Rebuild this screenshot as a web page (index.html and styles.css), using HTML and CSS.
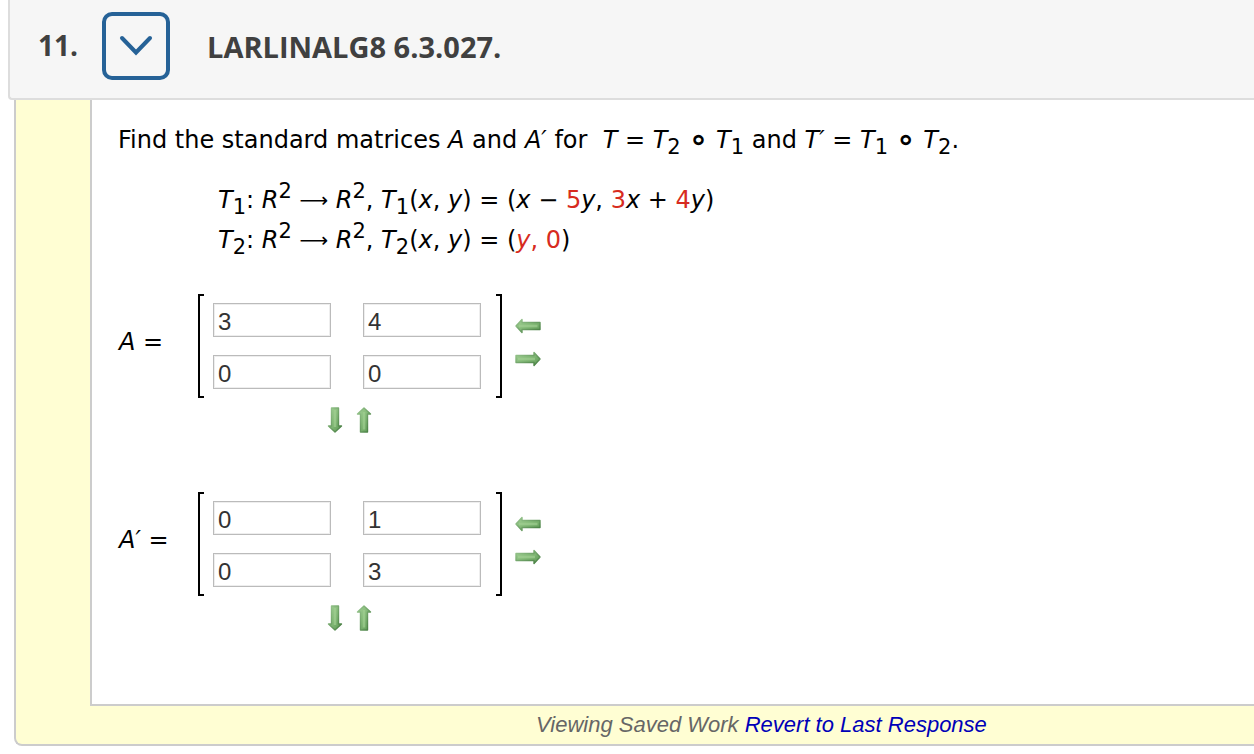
FILE: index.html
```html
<!DOCTYPE html>
<html lang="en">
<head>
<meta charset="utf-8">
<title>LARLINALG8 6.3.027.</title>
<link rel="stylesheet" href="styles.css">
</head>
<body>
<svg class="defs" width="0" height="0" aria-hidden="true">
  <defs>
    <linearGradient id="green" x1="0" y1="0" x2="1" y2="1">
      <stop offset="0" stop-color="#a3d096"/>
      <stop offset="0.5" stop-color="#82b976"/>
      <stop offset="1" stop-color="#5a9652"/>
    </linearGradient>
    <linearGradient id="edge" x1="0" y1="0" x2="1" y2="1">
      <stop offset="0" stop-color="#9bc991"/>
      <stop offset="1" stop-color="#427a3d"/>
    </linearGradient>
    <symbol id="left" viewBox="0 0 26 16">
      <path d="M1 8 7 1.500V4.500H25V11.500H7V14.500Z" fill="url(#green)" stroke="url(#edge)" stroke-width="1.400" stroke-linejoin="round"/>
      <path d="M4 8H22.500" stroke="#a5d296" stroke-width="2.500" opacity=".6"/>
    </symbol>
    <symbol id="right" viewBox="0 0 26 16">
      <path d="M25 8 19 1.500V4.500H1V11.500H19V14.500Z" fill="url(#green)" stroke="url(#edge)" stroke-width="1.400" stroke-linejoin="round"/>
      <path d="M3 8H20" stroke="#a5d296" stroke-width="2.500" opacity=".6"/>
    </symbol>
    <symbol id="down" viewBox="0 0 16 26">
      <path d="M8 25 1.500 19H4.500V1H11.500V19H14.500Z" fill="url(#green)" stroke="url(#edge)" stroke-width="1.400" stroke-linejoin="round"/>
      <path d="M8 3V20" stroke="#a5d296" stroke-width="2.500" opacity=".6"/>
    </symbol>
    <symbol id="up" viewBox="0 0 16 26">
      <path d="M8 1 1.500 7H4.500V25H11.500V7H14.500Z" fill="url(#green)" stroke="url(#edge)" stroke-width="1.400" stroke-linejoin="round"/>
      <path d="M8 5V22.500" stroke="#a5d296" stroke-width="2.500" opacity=".6"/>
    </symbol>
  </defs>
</svg>
<main class="question">
  <header class="question-header">
    <span class="number">11.</span>
    <button class="toggle" type="button" aria-label="Collapse question">
      <svg width="34" height="22" viewBox="0 0 34 22" fill="none" stroke="#266297" stroke-width="4" stroke-linecap="round"><path d="M3 3 17 17.500 31 3"/></svg>
    </button>
    <h1 class="title">LARLINALG8 6.3.027.</h1>
  </header>
  <div class="panel">
    <div class="content">
      <p class="prompt">Find the standard matrices <i>A</i> and <i>A′</i> for&nbsp; <i>T</i> = <i>T</i><sub>2</sub> <b class="compose">∘</b> <i>T</i><sub>1</sub> and <i>T′</i> = <i>T</i><sub>1</sub> <b class="compose">∘</b> <i>T</i><sub>2</sub>.</p>
      <div class="maps">
        <p><i>T</i><sub>1</sub>: <i>R</i><sup>2</sup> <span class="arrow">⟶</span> <i>R</i><sup>2</sup>, <i>T</i><sub>1</sub>(<i>x</i>, <i>y</i>) = (<i>x</i> − <em>5</em><i>y</i>, <em>3</em><i>x</i> + <em>4</em><i>y</i>)</p>
        <p><i>T</i><sub>2</sub>: <i>R</i><sup>2</sup> <span class="arrow">⟶</span> <i>R</i><sup>2</sup>, <i>T</i><sub>2</sub>(<i>x</i>, <i>y</i>) = (<em><i>y</i>, 0</em>)</p>
      </div>
      <div class="answer">
        <span class="name"><i>A</i> =</span>
        <div class="matrix">
          <input aria-label="A row 1 column 1" value="3"><input aria-label="A row 1 column 2" value="4">
          <input aria-label="A row 2 column 1" value="0"><input aria-label="A row 2 column 2" value="0">
        </div>
        <div class="columns">
          <button type="button" aria-label="Remove column"><svg width="26" height="16"><use href="#left"/></svg></button>
          <button type="button" aria-label="Add column"><svg width="26" height="16"><use href="#right"/></svg></button>
        </div>
        <div class="rows">
          <button type="button" aria-label="Add row"><svg width="16" height="26"><use href="#down"/></svg></button>
          <button type="button" aria-label="Remove row"><svg width="16" height="26"><use href="#up"/></svg></button>
        </div>
      </div>
      <div class="answer">
        <span class="name"><i>A′</i> =</span>
        <div class="matrix">
          <input aria-label="A prime row 1 column 1" value="0"><input aria-label="A prime row 1 column 2" value="1">
          <input aria-label="A prime row 2 column 1" value="0"><input aria-label="A prime row 2 column 2" value="3">
        </div>
        <div class="columns">
          <button type="button" aria-label="Remove column"><svg width="26" height="16"><use href="#left"/></svg></button>
          <button type="button" aria-label="Add column"><svg width="26" height="16"><use href="#right"/></svg></button>
        </div>
        <div class="rows">
          <button type="button" aria-label="Add row"><svg width="16" height="26"><use href="#down"/></svg></button>
          <button type="button" aria-label="Remove row"><svg width="16" height="26"><use href="#up"/></svg></button>
        </div>
      </div>
    </div>
    <footer class="status">Viewing Saved Work <a href="#">Revert to Last Response</a></footer>
  </div>
</main>
</body>
</html>
```
FILE: styles.css
```css
*, *::before, *::after { box-sizing: border-box; }

body {
  margin: 0;
  background: #fff;
  color: #000;
  font: 24px/40px Verdana, "DejaVu Sans", sans-serif;
}

p, h1 { margin: 0; }

button {
  padding: 0;
  border: 0;
  background: none;
  cursor: pointer;
}

svg { display: block; }

.defs { position: absolute; }

.question { padding-left: 8px; }

.question-header {
  display: flex;
  align-items: center;
  height: 100px;
  padding: 0 0 6px 28px;
  border: solid #ddd;
  border-width: 0 0 2px 2px;
  border-bottom-left-radius: 4px;
  background: #f6f6f6;
  color: #404040;
  font-family: "Open Sans", sans-serif;
  font-weight: 700;
}

.number {
  width: 64px;
  padding-bottom: 2px;
  font-size: 28px;
}

.toggle {
  display: grid;
  place-items: center;
  width: 68px;
  height: 68px;
  border: 4px solid #266297;
  border-radius: 10px;
}

.title {
  padding: 2px 0 0 37px;
  font-size: 29px;
}

.panel {
  margin-left: 6px;
  padding-left: 74px;
  border: solid #ccc;
  border-width: 0 0 2px 2px;
  border-bottom-left-radius: 8px;
  background: #fffed3;
}

.content {
  padding: 20px 0 73px 26px;
  border: solid #ccc;
  border-width: 0 0 2px 2px;
  background: #fff;
}

.maps { padding: 20px 0 34px 100px; }

sub, sup {
  font-size: 21px;
  line-height: 0;
}

sub { vertical-align: -6px; }
sup { vertical-align: 10px; }

.arrow {
  font-size: 20px;
  line-height: 0;
  vertical-align: 1px;
}

.compose {
  font-size: 32px;
  line-height: 0;
  vertical-align: -2px;
}

em {
  color: #d72b20;
  font-style: normal;
}

.answer {
  display: grid;
  grid-template-columns: 80px 304px 39px;
  row-gap: 9px;
}

.answer + .answer { margin-top: 59px; }

.name { padding: 28px 0 0 1px; }

.matrix {
  position: relative;
  display: grid;
  grid-template-columns: 118px 118px;
  gap: 18px 32px;
  padding: 9px 21px 9px 15px;
}

.matrix::before,
.matrix::after {
  content: "";
  position: absolute;
  top: 0;
  bottom: 0;
  width: 6px;
  border: 2px solid #000;
}

.matrix::before { left: 0; border-right: 0; }
.matrix::after { right: 0; border-left: 0; }

input {
  width: 100%;
  height: 34px;
  padding: 4px 4px 0;
  border: 1px solid #bbb;
  border-radius: 0;
  background: #fff;
  box-shadow: inset 0 0 0 1px #eee;
  color: #333;
  font: 24px "Liberation Sans", Arial, sans-serif;
}

.columns {
  display: flex;
  flex-direction: column;
  gap: 17px;
  padding: 24px 0 0 13px;
}

.rows {
  grid-column: 2;
  display: flex;
  justify-content: center;
  gap: 13px;
  padding-right: 2px;
}

.status {
  padding-left: 446px;
  color: #666;
  font: italic 22px/38px "Liberation Sans", Arial, sans-serif;
}

.status a {
  color: #0000b8;
  text-decoration: none;
}
```
